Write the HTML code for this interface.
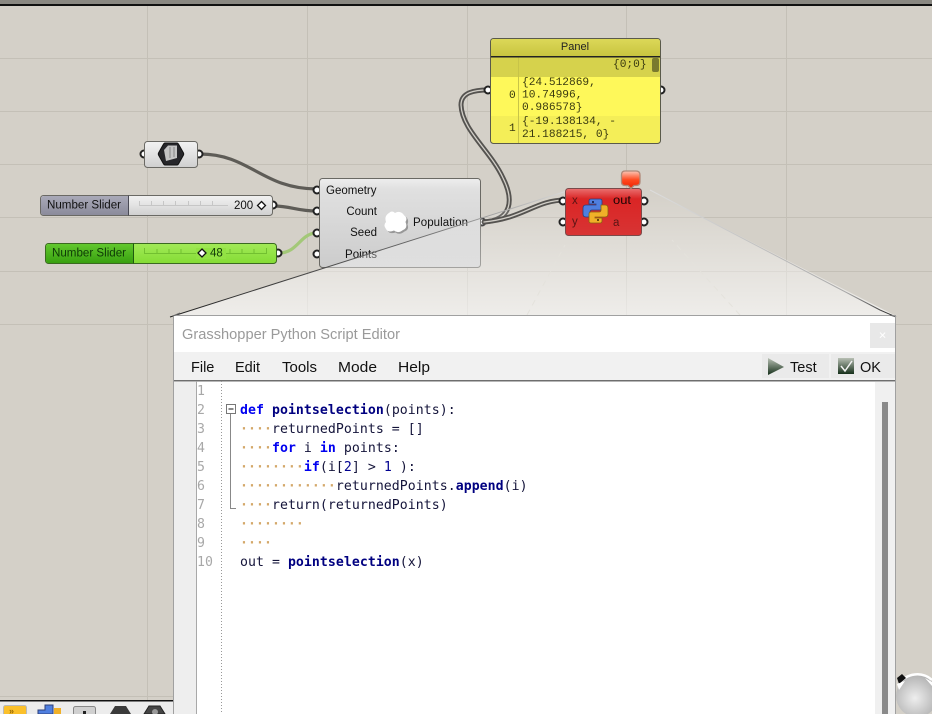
<!DOCTYPE html>
<html><head><meta charset="utf-8"><title>Grasshopper Python Script Editor</title>
<style>
html,body{margin:0;padding:0;background:#d4d0c8;width:932px;height:714px;overflow:hidden}
svg{display:block}
.ui{font-family:"Liberation Sans",sans-serif}
.m{font-family:"DejaVu Sans Mono","Liberation Mono",monospace;font-size:13.2px;letter-spacing:.05px;fill:#14143a}
.n{fill:#a8a8a8}
.b{font-weight:bold;fill:#0000f0}
.f{font-weight:bold;fill:#000080}
.d{fill:#d4a86a;font-weight:bold}
.l{font-family:"Liberation Sans",sans-serif;font-size:11.5px;fill:#111}
.p{font-family:"Liberation Mono",monospace;font-size:11.2px;fill:#3a3a10}
</style></head><body>
<svg width="932" height="714" viewBox="0 0 932 714" xmlns="http://www.w3.org/2000/svg">
<defs>
<linearGradient id="glow" x1="0" y1="190" x2="0" y2="316" gradientUnits="userSpaceOnUse"><stop offset="0" stop-color="#fff" stop-opacity="0"/><stop offset="1" stop-color="#fff" stop-opacity=".62"/></linearGradient>
<linearGradient id="lineL" x1="173" y1="316" x2="570" y2="190" gradientUnits="userSpaceOnUse"><stop offset="0" stop-color="#222"/><stop offset=".6" stop-color="#666"/><stop offset="1" stop-color="#ddd"/></linearGradient>
<linearGradient id="lineR" x1="896" y1="316" x2="650" y2="190" gradientUnits="userSpaceOnUse"><stop offset="0" stop-color="#222"/><stop offset=".2" stop-color="#aaa"/><stop offset="1" stop-color="#ddd"/></linearGradient>
<linearGradient id="node" x1="0" y1="0" x2="0" y2="1"><stop offset="0" stop-color="#f2f2f2"/><stop offset=".5" stop-color="#e2e2e2"/><stop offset="1" stop-color="#cfcfcf"/></linearGradient>
<linearGradient id="bigNode" x1="0" y1="0" x2="0" y2="1"><stop offset="0" stop-color="#eeeeee"/><stop offset=".12" stop-color="#e0e0e0"/><stop offset="1" stop-color="#cccccc"/></linearGradient>
<linearGradient id="grayL" x1="0" y1="0" x2="0" y2="1"><stop offset="0" stop-color="#a9a9b8"/><stop offset="1" stop-color="#8b8b9b"/></linearGradient>
<linearGradient id="greenL" x1="0" y1="0" x2="0" y2="1"><stop offset="0" stop-color="#62c82e"/><stop offset="1" stop-color="#38a010"/></linearGradient>
<linearGradient id="greenB" x1="0" y1="0" x2="0" y2="1"><stop offset="0" stop-color="#a2ea58"/><stop offset="1" stop-color="#84dc34"/></linearGradient>
<linearGradient id="red" x1="0" y1="0" x2="0" y2="1"><stop offset="0" stop-color="#ea7070"/><stop offset=".22" stop-color="#da2525"/><stop offset="1" stop-color="#d83434"/></linearGradient>
<linearGradient id="bub" x1="0" y1="0" x2="0" y2="1"><stop offset="0" stop-color="#fbc8b8"/><stop offset=".5" stop-color="#ff4a20"/><stop offset="1" stop-color="#f02000"/></linearGradient>
<linearGradient id="tst" x1="0" y1="0" x2="0" y2="1"><stop offset="0" stop-color="#b8c0b4"/><stop offset="1" stop-color="#16301a"/></linearGradient>
<radialGradient id="wheel" cx=".45" cy=".55" r=".55"><stop offset="0" stop-color="#eeeeee"/><stop offset="1" stop-color="#b4b4b4"/></radialGradient>
<linearGradient id="panelH" x1="0" y1="0" x2="0" y2="1"><stop offset="0" stop-color="#dcd858"/><stop offset="1" stop-color="#c8c440"/></linearGradient>
</defs>

<!-- canvas -->
<rect width="932" height="714" fill="#d4d0c8"/>
<rect width="932" height="5" fill="#8a8882"/>
<rect y="4" width="932" height="2" fill="#111"/>
<g stroke="#c4c0b7" stroke-width="1">
<path d="M0 58.500H932M0 111.500H932M0 164.500H932M0 217.500H932M0 271.500H932M0 324.500H932M0 696.500H173"/>
<path d="M147.500 6V700M307.500 6V320M467.500 6V320M626.500 6V320M786.500 6V320"/>
</g>

<!-- wires -->
<g fill="none" stroke-linecap="round">
<path d="M200 154C250 154 262 189 317 189" stroke="#5e5c57" stroke-width="3.200"/>
<path d="M273 206C292 206 296 211 317 211" stroke="#5e5c57" stroke-width="3.200"/>
<path d="M279 253C298 253 300 233 317 233" stroke="#a3c878" stroke-width="3.200"/>
<path d="M484 222C512 220 514 200 503 178C490 150 462 130 461 105C461 92 475 90 488 90" stroke="#555350" stroke-width="5"/>
<path d="M484 222C512 220 514 200 503 178C490 150 462 130 461 105C461 92 475 90 488 90" stroke="#d2cfc8" stroke-width="1.300"/>
</g>

<!-- geometry param -->
<g fill="#fff" stroke="#222" stroke-width="2"><circle cx="144" cy="154" r="3.500"/><circle cx="199" cy="154" r="3.500"/></g>
<rect x="144.500" y="141.500" width="53" height="26" rx="3" fill="url(#node)" stroke="#6a6964"/>
<path d="M165 143H177Q178 143 179 145L183.500 153Q184 154 183.500 155L179 163Q178 165 177 165H165Q164 165 163 163L158.500 155Q158 154 158.500 153L163 145Q164 143 165 143Z" fill="#26262a" stroke="#111"/>
<path d="M164 150L168 145.500H177V158L166 161Z" fill="#c4c4c4"/>
<path d="M170 147V158M174 147V157" stroke="#777" stroke-width=".8" fill="none"/>

<!-- slider 1 -->
<g fill="#fff" stroke="#222" stroke-width="2"><circle cx="273" cy="205" r="3.500"/></g>
<rect x="40.500" y="195.500" width="232" height="20" rx="3" fill="url(#node)" stroke="#6a6964"/>
<path d="M128.500 196H44Q41 196 41 199V212Q41 215 44 215H128.500Z" fill="url(#grayL)"/>
<path d="M128.500 195.500V215.500" stroke="#4a4a55"/>
<text x="47" y="208.500" class="l" textLength="74" lengthAdjust="spacingAndGlyphs">Number Slider</text>
<path d="M139.500 201V205.500H228M151.500 201V205M163.500 201V205M175.500 201V205M188.500 201V205M200.500 201V205M212.500 201V205" stroke="#c6c6c6" fill="none"/>
<text x="234" y="209" class="l">200</text>
<path d="M261.500 201.500L265.500 205.500L261.500 209.500L257.500 205.500Z" fill="#fff" stroke="#111" stroke-width="1.300"/>

<!-- slider 2 -->
<g fill="#fff" stroke="#222" stroke-width="2"><circle cx="278" cy="253" r="3.500"/></g>
<rect x="45.500" y="243.500" width="231" height="20" rx="3" fill="url(#greenB)" stroke="#3a6a20"/>
<path d="M133.500 244H49Q46 244 46 247V260Q46 263 49 263H133.500Z" fill="url(#greenL)"/>
<path d="M133.500 243.500V263.500" stroke="#1f5a10"/>
<text x="52" y="256.500" class="l" textLength="74" lengthAdjust="spacingAndGlyphs" style="fill:#0e3a06">Number Slider</text>
<path d="M144.500 248V253.500H266.500V248M157 249V253M169 249V253M181 249V253M230 249V253M242 249V253M254 249V253" stroke="#72c030" fill="none"/>
<rect x="196" y="248" width="30" height="11" fill="#92e244"/>
<text x="210" y="256.500" class="l" style="fill:#123a08">48</text>
<path d="M202 249L206 253L202 257L198 253Z" fill="#fff" stroke="#111" stroke-width="1.300"/>

<!-- population -->
<g fill="#fff" stroke="#222" stroke-width="2"><circle cx="317" cy="190" r="3.500"/><circle cx="317" cy="211" r="3.500"/><circle cx="317" cy="233" r="3.500"/><circle cx="317" cy="254" r="3.500"/><circle cx="482" cy="222" r="3.500"/></g>
<rect x="319.500" y="178.500" width="161" height="89" rx="3" fill="url(#bigNode)" stroke="#6a6964"/>
<text x="326" y="194" class="l">Geometry</text>
<text x="377" y="215" class="l" text-anchor="end">Count</text>
<text x="377" y="236" class="l" text-anchor="end">Seed</text>
<text x="377" y="258" class="l" text-anchor="end">Points</text>
<text x="413" y="226" class="l" textLength="55">Population</text>
<path d="M389 213Q394 211 396 213Q401 211 404 215Q408 218 406 223Q408 228 403 230Q398 234 394 231Q388 233 386 229Q383 225 386 222Q384 216 389 213Z" fill="#666" opacity=".55" transform="translate(1.500 1.500)"/>
<path d="M389 213Q392 210 395 213Q400 210 404 215Q408 218 405.500 222Q408 228 403 230Q398 234 394 230.500Q388 233 386 229Q383 225 386 222Q384 216 389 213Z" fill="#fff"/>

<!-- panel -->
<g fill="#fff" stroke="#222" stroke-width="2"><circle cx="488" cy="90" r="3.500"/><circle cx="661" cy="90" r="3.500"/></g>
<rect x="490.500" y="38.500" width="170" height="105" rx="3" fill="#f4ee58" stroke="#5a5a4a"/>
<path d="M491 56V42Q491 39 494 39H657Q660 39 660 42V56Z" fill="url(#panelH)"/>
<rect x="491" y="56" width="169" height="1.500" fill="#222"/>
<rect x="491" y="57.500" width="169" height="19.500" fill="#d6d24c"/>
<rect x="491" y="77" width="169" height="39" fill="#fef85a"/>
<path d="M518.500 57.500V143" stroke="#c8c448"/>
<text x="575" y="50" class="l" text-anchor="middle" style="fill:#222;font-size:11px">Panel</text>
<text x="613" y="67" class="p">{0;0}</text>
<rect x="652" y="58" width="7" height="14" rx="2" fill="#7a7a2e"/>
<text x="509" y="98" class="p">0</text>
<text x="522" y="85" class="p">{24.512869,</text>
<text x="522" y="97.500" class="p">10.74996,</text>
<text x="522" y="110" class="p">0.986578}</text>
<text x="509" y="131" class="p">1</text>
<text x="522" y="124" class="p">{-19.138134, -</text>
<text x="522" y="137" class="p">21.188215, 0}</text>

<!-- zoom cone -->
<path d="M173 316L570 190H650L896 316Z" fill="url(#glow)"/>
<path d="M170 317L570 190" stroke="url(#lineL)" fill="none"/>
<path d="M896 317L880 310L650 190" stroke="url(#lineR)" fill="none"/>
<path d="M527 315L565 245M740 315L672 240" stroke="#e4e2dc" stroke-dasharray="6 5" fill="none"/>

<!-- wire into python -->
<g fill="none" stroke-linecap="round">
<path d="M484 222C525 218 535 200 566 200" stroke="#555350" stroke-width="5"/>
<path d="M484 222C525 218 535 200 566 200" stroke="#d2cfc8" stroke-width="1.300"/>
</g>

<!-- python -->
<g fill="#fff" stroke="#222" stroke-width="2"><circle cx="563" cy="201" r="3.500"/><circle cx="563" cy="222" r="3.500"/><circle cx="644" cy="201" r="3.500"/><circle cx="644" cy="222" r="3.500"/></g>
<rect x="565.500" y="188.500" width="76" height="47" rx="3" fill="url(#red)" stroke="#7a4a4a"/>
<text x="572" y="204" class="l" style="fill:#5a1414">x</text>
<text x="572" y="225" class="l" style="fill:#5a1414">y</text>
<text x="613" y="204" class="l" textLength="18" lengthAdjust="spacingAndGlyphs" style="fill:#1a0505">out</text>
<text x="613" y="226" class="l" style="fill:#5a1414">a</text>
<path d="M591 199H600Q602 199 602 201V208Q602 210 600 210H592Q590 210 590 212V217H586Q583 217 583 214V208Q583 205 586 205H596V204H589V201Q589 199 591 199Z" fill="#4f7fe0" stroke="#2d3f7a" stroke-width=".8"/>
<path d="M591 199H600Q602 199 602 201V208Q602 210 600 210H592Q590 210 590 212V217H586Q583 217 583 214V208Q583 205 586 205H596V204H589V201Q589 199 591 199Z" fill="#f0b028" stroke="#8a6010" stroke-width=".8" transform="rotate(180 595.500 211)"/>
<rect x="592" y="201" width="2" height="2" fill="#1e2c60"/><rect x="597" y="219" width="2" height="2" fill="#6a4a08"/>
<path d="M625 171H636Q640 171 640 175V182Q640 185.500 636 185.500H634L631 188.500L628 185.500H625Q621.500 185.500 621.500 182V175Q621.500 171 625 171Z" fill="url(#bub)" stroke="#b08878" stroke-width="1.300"/>

<!-- bottom-left toolbar -->
<rect x="0" y="700" width="173" height="14" fill="#ececec"/>
<rect x="0" y="700" width="173" height="1.500" fill="#111"/>
<rect x="3.500" y="705.500" width="23" height="12" rx="2" fill="#fbc02a" stroke="#b9b9b9"/>
<text x="9" y="714" class="l" style="fill:#9a6a00;font-weight:bold;font-size:9px">»</text>
<path d="M38 714V710H45V705H53V714Z" fill="#4f7fe0" stroke="#2d3f7a"/><rect x="54" y="708" width="7" height="8" fill="#f0b028"/>
<rect x="73.500" y="706.500" width="22" height="12" rx="2" fill="#d0d0d0" stroke="#888"/><rect x="83" y="711" width="3" height="3" fill="#222"/>
<path d="M115 706H126L131 714H110Z" fill="#3a3a3a"/>
<path d="M149 706H160L165 714H144Z" fill="#444" stroke="#222"/><circle cx="155" cy="712" r="3" fill="#999"/>

<!-- editor window -->
<rect x="173.500" y="315.500" width="722" height="400" fill="#fff" stroke="#a0a0a0"/>
<path d="M173 316L180 313M896 317L890 315" stroke="#666" fill="none"/>
<text x="182" y="339" class="ui" font-size="14.500" fill="#9a9a9a" textLength="218" lengthAdjust="spacingAndGlyphs">Grasshopper Python Script Editor</text>
<rect x="870" y="323" width="25" height="25" fill="#e8e8e8"/>
<text x="882.500" y="339.500" class="ui" font-size="13" fill="#fff" text-anchor="middle">×</text>
<rect x="174" y="352" width="721" height="28" fill="#f1f1f1"/>
<g class="ui" font-size="14.500" fill="#111">
<text x="191" y="372">File</text><text x="235" y="372">Edit</text><text x="282" y="372" textLength="35" lengthAdjust="spacingAndGlyphs">Tools</text><text x="338" y="372" textLength="39" lengthAdjust="spacingAndGlyphs">Mode</text><text x="398" y="372" textLength="32" lengthAdjust="spacingAndGlyphs">Help</text>
<rect x="762" y="354" width="67" height="24" fill="#eaeaea"/>
<rect x="831" y="354" width="64" height="24" fill="#eaeaea"/>
<path d="M768 358L784 367L768 375Z" fill="url(#tst)"/>
<text x="790" y="372">Test</text>
<rect x="838" y="358" width="16" height="16" fill="url(#tst)"/>
<path d="M841 366L845 371L852 361" fill="none" stroke="#f4f4f4" stroke-width="1.500"/>
<text x="860" y="372">OK</text>
</g>
<rect x="174" y="380" width="721" height="1.500" fill="#6e6e6e"/>
<rect x="174" y="382" width="22" height="332" fill="#eeeeee"/>
<path d="M196.500 381V714" stroke="#a8a8a8"/>
<path d="M221.500 381V714" stroke="#999" stroke-dasharray="1 2"/>
<rect x="875" y="382" width="20" height="332" fill="#f0f0f0"/>
<rect x="882" y="402" width="6" height="312" fill="#8a8a8a"/>
<path d="M895.500 316V714" stroke="#a0a0a0"/>

<!-- fold -->
<rect x="226.500" y="404.500" width="9" height="9" fill="#fff" stroke="#777"/>
<path d="M228.500 409H233.500" stroke="#111"/>
<path d="M230.500 414V508.500H236" stroke="#888" fill="none"/>

<!-- code -->
<g class="m" xml:space="preserve">
<text x="197" y="395" class="m n">1</text>
<text x="197" y="414" class="m n">2</text>
<text x="197" y="433" class="m n">3</text>
<text x="197" y="452" class="m n">4</text>
<text x="197" y="471" class="m n">5</text>
<text x="197" y="490" class="m n">6</text>
<text x="197" y="509" class="m n">7</text>
<text x="197" y="528" class="m n">8</text>
<text x="197" y="547" class="m n">9</text>
<text x="197" y="566" class="m n">10</text>
<text x="240" y="414" class="m"><tspan class="b">def</tspan> <tspan class="f">pointselection</tspan>(points):</text>
<text x="240" y="433" class="m"><tspan class="d">····</tspan>returnedPoints = []</text>
<text x="240" y="452" class="m"><tspan class="d">····</tspan><tspan class="b">for</tspan> i <tspan class="b">in</tspan> points:</text>
<text x="240" y="471" class="m"><tspan class="d">········</tspan><tspan class="b">if</tspan>(i[<tspan style="fill:#000090">2</tspan>] &gt; <tspan style="fill:#000090">1</tspan> ):</text>
<text x="240" y="490" class="m"><tspan class="d">············</tspan>returnedPoints.<tspan class="f">append</tspan>(i)</text>
<text x="240" y="509" class="m"><tspan class="d">····</tspan>return(returnedPoints)</text>
<text x="240" y="528" class="m d">········</text>
<text x="240" y="547" class="m d">····</text>
<text x="240" y="566" class="m">out = <tspan class="f">pointselection</tspan>(x)</text>
</g>

<!-- wheel -->
<circle cx="917" cy="696" r="21" fill="url(#wheel)"/>
<path d="M899 684A22 22 0 0 1 932 680" fill="none" stroke="#fff" stroke-width="2.500"/>
<path d="M897 678L902 674L906 678L899 684Z" fill="#111"/>
<path d="M897 684L905 681L899 690Z" fill="#fff"/>
<path d="M925 678L932 682V686Z" fill="#fff"/>
</svg>
</body></html>
